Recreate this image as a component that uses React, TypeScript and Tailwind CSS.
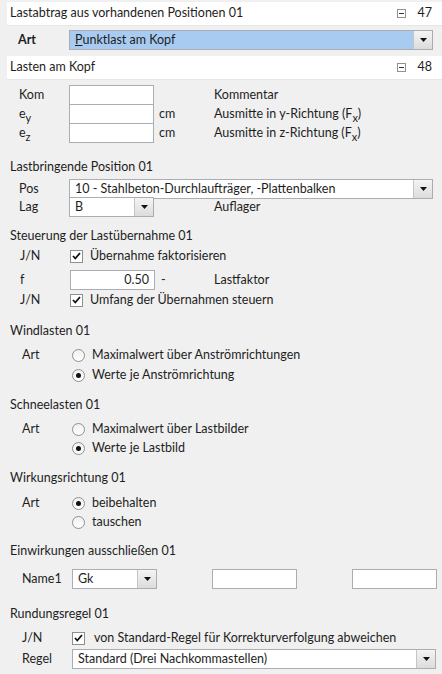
import React from 'react'

const font = { fontFamily: '"Segoe UI", Lato, "Noto Sans", sans-serif' }

function Arrow() {
  return (
    <svg width="7" height="4" viewBox="0 0 7 4">
      <path d="M0 0h7L3.5 4z" fill="#111" />
    </svg>
  )
}

function DropButton() {
  return (
    <div className="flex h-full w-[19px] shrink-0 items-center justify-center border-l border-[#c5c5c5] bg-gradient-to-b from-[#f4f4f4] to-[#dcdcdc]">
      <Arrow />
    </div>
  )
}

function Combo({ value, width, blue }: { value: React.ReactNode; width: string; blue?: boolean }) {
  return (
    <div className={`flex h-[20px] items-center border border-[#abadb3] ${width} ${blue ? 'bg-[#a8cbf1]' : 'bg-white'}`}>
      <div className="flex-1 overflow-hidden whitespace-nowrap pl-[5px]">{value}</div>
      <DropButton />
    </div>
  )
}

function Input({ value, className = '' }: { value?: string; className?: string }) {
  return (
    <div className={`flex h-[20px] w-[85px] items-center justify-end border border-[#abadb3] bg-white pr-[5px] ${className}`}>
      {value}
    </div>
  )
}

function Check() {
  return (
    <div className="flex h-[13px] w-[13px] items-center justify-center border border-[#8e8f8f] bg-white">
      <svg width="9" height="8" viewBox="0 0 9 8">
        <path d="M1 4l2.3 2.5L8 1" stroke="#111" strokeWidth="1.8" fill="none" />
      </svg>
    </div>
  )
}

function Radio({ on }: { on?: boolean }) {
  return (
    <div className="flex h-[13px] w-[13px] items-center justify-center rounded-full border border-[#8e8f8f] bg-gradient-to-b from-[#f0f0f0] to-white">
      {on && <div className="h-[5px] w-[5px] rounded-full bg-[#111]" />}
    </div>
  )
}

function Header({ title, num }: { title: string; num: string }) {
  return (
    <div className="ml-[7px] flex h-[24px] items-center border-b border-[#e6e6e6] bg-white pl-[3px] pr-[10px]">
      <div className="flex-1">{title}</div>
      <div className="mr-[12px] flex h-[9px] w-[9px] items-center justify-center border border-[#919191]">
        <div className="h-px w-[5px] bg-[#333]" />
      </div>
      <div>{num}</div>
    </div>
  )
}

function Section({ title, className = '' }: { title: string; className?: string }) {
  return <div className={`flex h-[20px] items-center pl-[10px] ${className}`}>{title}</div>
}

function Row({ label, children, className = '', h = 'h-[20px]', lx = 'pl-[20px]' }: { label?: React.ReactNode; children: React.ReactNode; className?: string; h?: string; lx?: string }) {
  return (
    <div className={`flex items-center ${h} ${lx} ${className}`}>
      <div className="w-[50px] shrink-0">{label}</div>
      {children}
    </div>
  )
}

function Sub({ b, s }: { b: string; s: string }) {
  return (
    <span>
      {b}
      <sub className="relative top-[1px] text-[11px] align-[-3px]">{s}</sub>
    </span>
  )
}

export default function App() {
  return (
    <div className="h-[674px] w-[442px] overflow-hidden bg-[#f0f0f0] text-[12.5px] text-[#1e1e1e]" style={font}>
      <div className="h-[2px]" />
      <Header title="Lastabtrag aus vorhandenen Positionen 01" num="47" />

      <div className="mt-[4px] flex h-[20px] items-center pl-[18px] pr-[9px]">
        <div className="w-[51px] shrink-0 font-bold">Art</div>
        <Combo
          width="flex-1"
          blue
          value={
            <span>
              <span className="underline">P</span>unktlast am Kopf
            </span>
          }
        />
      </div>

      <div className="mt-[6px]">
        <Header title="Lasten am Kopf" num="48" />
      </div>

      <div className="mt-[5px] flex flex-col">
        <Row label="Kom" lx="pl-[19px]" h="h-[20px]">
          <Input />
          <div className="w-[60px]" />
          <div>Kommentar</div>
        </Row>
        <Row label={<Sub b="e" s="y" />} lx="pl-[19px]" h="h-[20px]" className="-mt-px">
          <Input />
          <div className="w-[60px] pl-[5px]">cm</div>
          <div>
            Ausmitte in y-Richtung (<Sub b="F" s="x" />)
          </div>
        </Row>
        <Row label={<Sub b="e" s="z" />} lx="pl-[19px]" h="h-[20px]" className="-mt-px">
          <Input />
          <div className="w-[60px] pl-[5px]">cm</div>
          <div>
            Ausmitte in z-Richtung (<Sub b="F" s="x" />)
          </div>
        </Row>
      </div>

      <Section title="Lastbringende Position 01" className="mt-[14px]" />
      <div className="mt-[2px] flex flex-col pr-[9px]">
        <Row label="Pos" lx="pl-[19px]">
          <Combo width="flex-1" value="10 - Stahlbeton-Durchlaufträger, -Plattenbalken" />
        </Row>
        <Row label="Lag" lx="pl-[19px]" className="-mt-[2px]">
          <Combo width="w-[85px]" value="B" />
          <div className="w-[60px]" />
          <div>Auflager</div>
        </Row>
      </div>

      <Section title="Steuerung der Lastübernahme 01" className="mt-[9px]" />
      <Row label="J/N">
        <Check />
        <div className="pl-[7px]">Übernahme faktorisieren</div>
      </Row>
      <Row label="f" className="mt-[4px]">
        <Input value="0.50" />
        <div className="w-[59px] pl-[6px]">-</div>
        <div>Lastfaktor</div>
      </Row>
      <Row label="J/N">
        <Check />
        <div className="pl-[7px]">Umfang der Übernahmen steuern</div>
      </Row>

      <Section title="Windlasten 01" className="mt-[11px]" />
      <Row label="Art" className="mt-[4px]" lx="pl-[22px]">
        <Radio />
        <div className="pl-[7px]">Maximalwert über Anströmrichtungen</div>
      </Row>
      <Row lx="pl-[22px]">
        <Radio on />
        <div className="pl-[7px]">Werte je Anströmrichtung</div>
      </Row>

      <Section title="Schneelasten 01" className="mt-[10px]" />
      <Row label="Art" className="mt-[4px]" lx="pl-[22px]">
        <Radio />
        <div className="pl-[7px]">Maximalwert über Lastbilder</div>
      </Row>
      <Row lx="pl-[22px]" h="h-[19px]">
        <Radio on />
        <div className="pl-[7px]">Werte je Lastbild</div>
      </Row>

      <Section title="Wirkungsrichtung 01" className="mt-[10px]" />
      <Row label="Art" className="mt-[5px]" lx="pl-[22px]">
        <Radio on />
        <div className="pl-[7px]">beibehalten</div>
      </Row>
      <Row lx="pl-[22px]" h="h-[19px]">
        <Radio />
        <div className="pl-[7px]">tauschen</div>
      </Row>

      <Section title="Einwirkungen ausschließen 01" className="mt-[9px]" />
      <div className="mt-[8px] flex h-[20px] items-center pl-[22px]">
        <div className="w-[50px] shrink-0">Name1</div>
        <Combo width="w-[85px]" value="Gk" />
        <Input className="ml-[55px]" />
        <Input className="ml-[55px]" />
      </div>

      <Section title="Rundungsregel 01" className="mt-[15px]" />
      <div className="mt-[4px] flex flex-col pr-[6px]">
        <Row label="J/N" lx="pl-[22px]">
          <Check />
          <div className="pl-[9px]">von Standard-Regel für Korrekturverfolgung abweichen</div>
        </Row>
        <Row label="Regel" lx="pl-[22px]" className="mt-px">
          <Combo width="w-[364px]" value="Standard (Drei Nachkommastellen)" />
        </Row>
      </div>
    </div>
  )
}
